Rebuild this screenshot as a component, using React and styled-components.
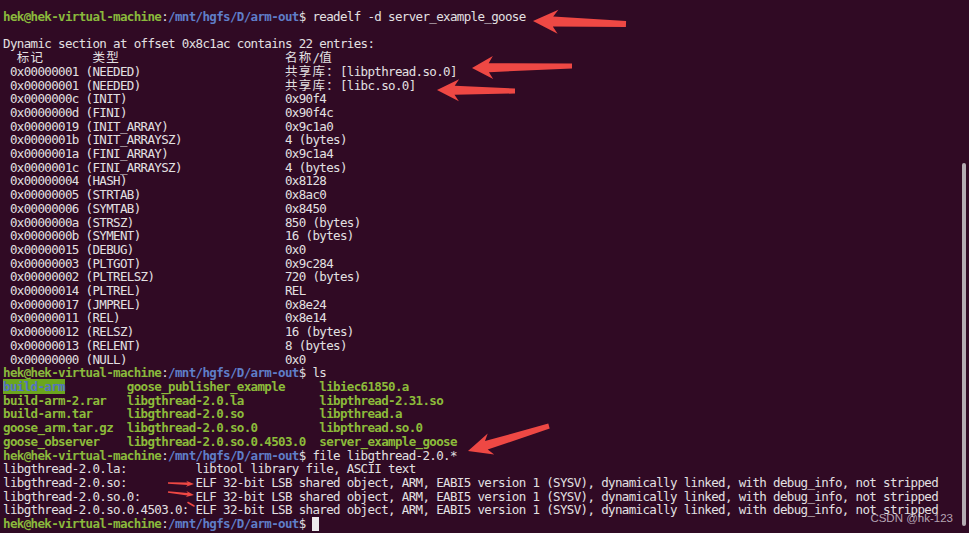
import React from "react";
import styled, { createGlobalStyle } from "styled-components";

const GlobalStyle = createGlobalStyle`
  html, body {
    margin: 0;
    padding: 0;
    background: #300a24;
  }
`;

const entries = [
  ["0x00000001", "NEEDED", { lib: "[libpthread.so.0]" }],
  ["0x00000001", "NEEDED", { lib: "[libc.so.0]" }],
  ["0x0000000c", "INIT", "0x90f4"],
  ["0x0000000d", "FINI", "0x90f4c"],
  ["0x00000019", "INIT_ARRAY", "0x9c1a0"],
  ["0x0000001b", "INIT_ARRAYSZ", "4 (bytes)"],
  ["0x0000001a", "FINI_ARRAY", "0x9c1a4"],
  ["0x0000001c", "FINI_ARRAYSZ", "4 (bytes)"],
  ["0x00000004", "HASH", "0x8128"],
  ["0x00000005", "STRTAB", "0x8ac0"],
  ["0x00000006", "SYMTAB", "0x8450"],
  ["0x0000000a", "STRSZ", "850 (bytes)"],
  ["0x0000000b", "SYMENT", "16 (bytes)"],
  ["0x00000015", "DEBUG", "0x0"],
  ["0x00000003", "PLTGOT", "0x9c284"],
  ["0x00000002", "PLTRELSZ", "720 (bytes)"],
  ["0x00000014", "PLTREL", "REL"],
  ["0x00000017", "JMPREL", "0x8e24"],
  ["0x00000011", "REL", "0x8e14"],
  ["0x00000012", "RELSZ", "16 (bytes)"],
  ["0x00000013", "RELENT", "8 (bytes)"],
  ["0x00000000", "NULL", "0x0"],
];

const lsRows = [
  ["build-arm", "goose_publisher_example", "libiec61850.a"],
  ["build-arm-2.rar", "libgthread-2.0.la", "libpthread-2.31.so"],
  ["build-arm.tar", "libgthread-2.0.so", "libpthread.a"],
  ["goose_arm.tar.gz", "libgthread-2.0.so.0", "libpthread.so.0"],
  ["goose_observer", "libgthread-2.0.so.0.4503.0", "server_example_goose"],
];

const ELF =
  "ELF 32-bit LSB shared object, ARM, EABI5 version 1 (SYSV), dynamically linked, with debug_info, not stripped";

const fileRows = [
  ["libgthread-2.0.la:", "libtool library file, ASCII text"],
  ["libgthread-2.0.so:", ELF],
  ["libgthread-2.0.so.0:", ELF],
  ["libgthread-2.0.so.0.4503.0:", ELF],
];

// red annotation arrows: tip, tail, head length, head half width
const arrows = [
  { tip: [533, 21], tail: [626, 24], head: 25, w: 12, neck: 5, end: 3 },
  { tip: [472, 68], tail: [572, 66], head: 21, w: 11.5, neck: 4.5, end: 2.5 },
  { tip: [437, 90], tail: [515, 91], head: 22, w: 11, neck: 4.5, end: 2.5 },
  { tip: [468, 451], tail: [549, 426], head: 24, w: 11, neck: 4.5, end: 2.5 },
  { tip: [194, 484], tail: [168, 483], head: 8, w: 3, neck: 1.2, end: 0.7 },
  { tip: [194, 495], tail: [168, 492], head: 8, w: 3, neck: 1.2, end: 0.7 },
];

const arrowPoints = ({ tip, tail, head, w, neck, end }) => {
  const dx = tail[0] - tip[0];
  const dy = tail[1] - tip[1];
  const len = Math.hypot(dx, dy);
  const ux = dx / len;
  const uy = dy / len;
  const nx = -uy;
  const ny = ux;
  const at = (d, s) => [tip[0] + ux * d + nx * s, tip[1] + uy * d + ny * s];
  const pts = [
    tip,
    at(head, w),
    at(head * 0.8, neck),
    [tail[0] + nx * end, tail[1] + ny * end],
    [tail[0] - nx * end, tail[1] - ny * end],
    at(head * 0.8, -neck),
    at(head, -w),
  ];
  return pts.map((p) => p.map((v) => v.toFixed(1)).join(",")).join(" ");
};

const Terminal = () => {
  return (
    <>
      <GlobalStyle />
      <Window>
        <Screen>
          <Line>
            <Prompt />
            {" readelf -d server_example_goose"}
          </Line>
          <Line> </Line>
          <Line>Dynamic section at offset 0x8c1ac contains 22 entries:</Line>
          <Line>
            {"  "}
            <Wide>标记</Wide>
            {"       "}
            <Wide>类型</Wide>
            {" ".repeat(24)}
            <Wide>名称</Wide>/<Wide>值</Wide>
          </Line>
          {entries.map(([tag, type, value], i) => (
            <Line key={i}>
              {` ${tag} (${type})`.padEnd(41)}
              {typeof value === "string" ? (
                value
              ) : (
                <>
                  <Wide>共享库：</Wide>
                  {value.lib}
                </>
              )}
            </Line>
          ))}
          <Line>
            <Prompt />
            {" ls"}
          </Line>
          {lsRows.map(([a, b, c], i) => (
            <Line key={i}>
              <Seg $kind={i === 0 ? "dir" : "file"}>{a}</Seg>
              {" ".repeat(18 - a.length)}
              <Seg $kind="file">{b}</Seg>
              {" ".repeat(28 - b.length)}
              <Seg $kind="file">{c}</Seg>
            </Line>
          ))}
          <Line>
            <Prompt />
            {" file libgthread-2.0.*"}
          </Line>
          {fileRows.map(([name, desc], i) => (
            <Line key={i}>
              {`${name} `.padEnd(28)}
              {desc}
            </Line>
          ))}
          <Line>
            <Prompt />
            {" "}
            <Cursor> </Cursor>
          </Line>
        </Screen>
        <ScrollTrack>
          <Thumb />
        </ScrollTrack>
        <Marks viewBox="0 0 969 533" width="969" height="533">
          {arrows.map((a, i) => (
            <polygon key={i} points={arrowPoints(a)} fill="#ee4844" />
          ))}
          <line
            x1="188"
            y1="502.5"
            x2="194"
            y2="506"
            stroke="#ee4844"
            strokeWidth="1.6"
            strokeLinecap="round"
          />
        </Marks>
        <Watermark>CSDN @hk-123</Watermark>
      </Window>
    </>
  );
};

const Prompt = () => (
  <>
    <Seg $kind="user">hek@hek-virtual-machine</Seg>:
    <Seg $kind="path">/mnt/hgfs/D/arm-out</Seg>$
  </>
);

export default Terminal;

const Window = styled.div`
  position: relative;
  display: flex;
  width: 969px;
  height: 533px;
  overflow: hidden;
  background: #300a24;
`;

const Screen = styled.div`
  flex: 1;
  padding: 10px 0 0 3px;
  font-family: "DejaVu Sans Mono", "Liberation Mono", monospace;
  font-size: 12.5px;
  letter-spacing: -0.65px;
  color: #e3e0e2;
`;

const Line = styled.div`
  height: 13.71px;
  line-height: 13.71px;
  white-space: pre;
`;

const kindColors = {
  user: "#8ab93c",
  path: "#5f7ec8",
  file: "#8cbb3a",
  dir: "#5473c4",
};

const Seg = styled.span`
  color: ${(p) => kindColors[p.$kind]};
  font-weight: bold;
  background: ${(p) => (p.$kind === "dir" ? "#6ba61d" : "transparent")};
`;

const Wide = styled.span`
  font-family: "Noto Sans CJK SC", sans-serif;
  font-size: 12.5px;
  line-height: 0;
  letter-spacing: 1.25px;
`;

const Cursor = styled.span`
  display: inline-block;
  width: 6.9px;
  height: 13.7px;
  vertical-align: top;
  background: #ecebec;
`;

const ScrollTrack = styled.div`
  display: flex;
  width: 4px;
  padding: 163px 3px 7px 0;
`;

const Thumb = styled.div`
  flex: 1;
  border-radius: 2px;
  background: #b4acb2;
`;

const Marks = styled.svg`
  position: absolute;
  left: 0;
  top: 0;
  pointer-events: none;
`;

const Watermark = styled.div`
  position: absolute;
  right: 16px;
  top: 511px;
  font-family: "Liberation Sans", Arial, sans-serif;
  font-size: 11.5px;
  line-height: 14px;
  color: rgba(225, 220, 225, 0.75);
`;
